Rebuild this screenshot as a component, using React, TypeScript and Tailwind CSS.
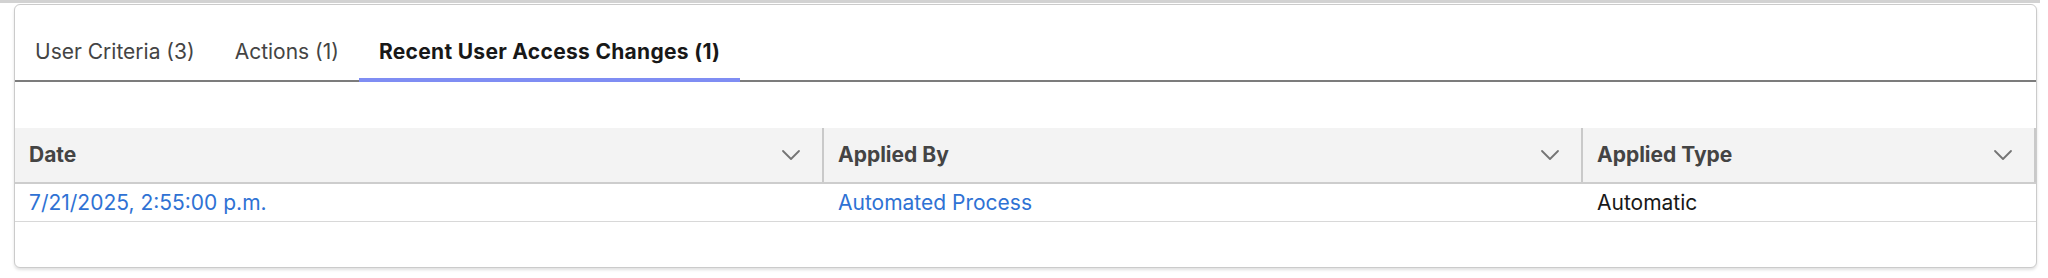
import React from "react";

function Chevron() {
  return (
    <svg width="20" height="12" viewBox="0 0 20 12" fill="none" className="shrink-0">
      <polyline points="2,2 10,10 18,2" stroke="#747474" strokeWidth="1.8" strokeLinecap="round" strokeLinejoin="round" />
    </svg>
  );
}

export default function App() {
  const tabs = [
    { label: "User Criteria (3)", active: false },
    { label: "Actions (1)", active: false },
    { label: "Recent User Access Changes (1)", active: true },
  ];

  const columns = ["Date", "Applied By", "Applied Type"];

  return (
    <div
      className="w-[2048px] h-[278px] bg-white overflow-hidden"
      style={{ fontFamily: "Inter, 'Liberation Sans', sans-serif" }}
    >
      {/* bottom edge of the element above */}
      <div className="w-[2040px] h-[3px] bg-[#d2d2d2]" />

      {/* Card */}
      <div className="ml-[14px] mt-[1px] w-[2023px] h-[264px] border border-[#cbcbcb] rounded-[6px] bg-white shadow-[0_2px_3px_rgba(0,0,0,0.12)]">
        {/* Tabs */}
        <div className="flex h-[77px] border-b-2 border-[#7c7c7c]">
          {tabs.map((tab) => (
            <div
              key={tab.label}
              className={
                tab.active
                  ? "flex items-center h-[77px] -mb-[2px] px-[20px] pt-[20px] border-b-4 border-[#7f8df3] text-[21px] font-bold tracking-[0.3px] text-[#181818]"
                  : "flex items-center h-[77px] -mb-[2px] px-[20px] pt-[20px] border-b-4 border-transparent text-[21px] text-[#444444]"
              }
            >
              {tab.label}
            </div>
          ))}
        </div>

        {/* Table */}
        <div className="mt-[46px]">
          <div className="grid grid-cols-[809px_759px_1fr] h-[56px] bg-[#f3f3f3] border-b-2 border-[#cdcdcd]">
            {columns.map((col) => (
              <div
                key={col}
                className="flex items-center justify-between pl-[14px] pr-[21px] border-r-2 border-[#c9c9c9] text-[21px] font-bold text-[#444444]"
              >
                <span>{col}</span>
                <Chevron />
              </div>
            ))}
          </div>
          <div className="grid grid-cols-[809px_759px_1fr] h-[38px] border-b border-[#d8d8d8] text-[21px]">
            <div className="flex items-center pl-[14px] pt-[1px] text-[#2f72d4]">7/21/2025, 2:55:00 p.m.</div>
            <div className="flex items-center pl-[14px] pt-[1px] text-[#2f72d4]">Automated Process</div>
            <div className="flex items-center pl-[14px] pt-[1px] text-[#181818]">Automatic</div>
          </div>
        </div>
      </div>
    </div>
  );
}
